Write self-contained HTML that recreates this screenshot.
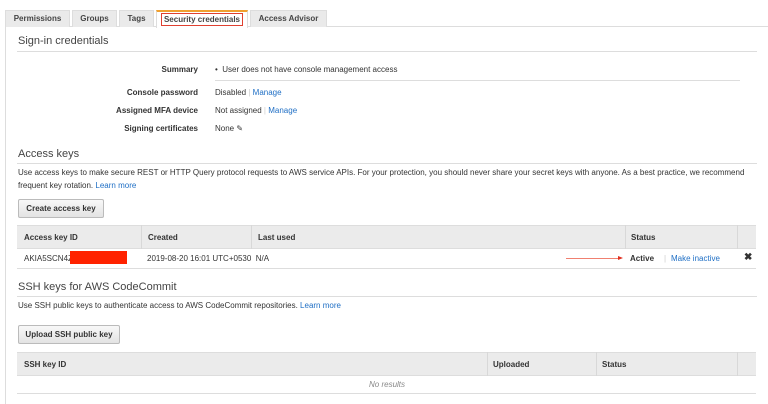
<!DOCTYPE html><html><head><style>
*{margin:0;padding:0;box-sizing:border-box}
body{width:768px;height:404px;background:#fff;font-family:"Liberation Sans",Arial,sans-serif;font-size:8px;color:#333;position:relative;overflow:hidden}
.a{position:absolute;white-space:nowrap}
.tab{position:absolute;top:10px;height:17px;background:#eaeaea;border:1px solid #ddd;border-bottom:none;font-weight:bold;font-size:8px;line-height:16px;text-align:center;color:#444}
.h{font-size:11px;color:#444}
.ln{position:absolute;height:1px;background:#ddd}
.lb{position:absolute;right:570px;font-weight:bold;font-size:8px}
.lk{color:#1f6fc5}
.btn{position:absolute;background:linear-gradient(#f8f8f8,#e3e3e3);border:1px solid #bbb;border-radius:2px;font-weight:bold;font-size:8px;line-height:17px;text-align:center;color:#333}
.th{position:absolute;background:#ebebeb;border-top:1px solid #ddd;border-bottom:1px solid #ddd;height:24px}
.vd{position:absolute;width:1px;background:#d8d8d8}
</style></head><body>
<div style="position:absolute;left:5px;top:26px;width:763px;height:378px;border-left:1px solid #ddd;border-top:1px solid #ddd"></div>
<div class="tab" style="left:5px;width:65px">Permissions</div>
<div class="tab" style="left:72px;width:45px">Groups</div>
<div class="tab" style="left:119px;width:35px">Tags</div>
<div class="tab" style="left:156px;width:92px;background:#fff;border-top:2px solid #f0a030;height:18px"><span style="border:1px solid #e04030;padding:0 2px;display:inline-block;line-height:11px;margin-top:1px">Security credentials</span></div>
<div class="tab" style="left:250px;width:77px">Access Advisor</div>
<div class="a h" style="left:18px;top:35px">Sign-in credentials</div>
<div class="ln" style="left:17px;top:51px;width:740px"></div>
<div class="lb" style="top:65px">Summary</div>
<div class="a" style="left:215px;top:65px">•&nbsp; User does not have console management access</div>
<div class="ln" style="left:215px;top:80px;width:525px"></div>
<div class="lb" style="top:88px">Console password</div>
<div class="a" style="left:215px;top:88px">Disabled <span style="color:#ccc">|</span> <span class="lk">Manage</span></div>
<div class="lb" style="top:106px">Assigned MFA device</div>
<div class="a" style="left:215px;top:106px">Not assigned <span style="color:#ccc">|</span> <span class="lk">Manage</span></div>
<div class="lb" style="top:124px">Signing certificates</div>
<div class="a" style="left:215px;top:124px">None ✎</div>
<div class="a h" style="left:18px;top:148px">Access keys</div>
<div class="ln" style="left:17px;top:163px;width:740px"></div>
<div class="a" style="left:18px;top:168px">Use access keys to make secure REST or HTTP Query protocol requests to AWS service APIs. For your protection, you should never share your secret keys with anyone. As a best practice, we recommend</div>
<div class="a" style="left:18px;top:181px">frequent key rotation. <span class="lk">Learn more</span></div>
<div class="btn" style="left:18px;top:199px;width:86px;height:19px">Create access key</div>
<div class="th" style="left:17px;top:225px;width:739px"></div>
<div class="vd" style="left:141px;top:225px;height:24px"></div>
<div class="vd" style="left:251px;top:225px;height:24px"></div>
<div class="vd" style="left:625px;top:225px;height:24px"></div>
<div class="vd" style="left:737px;top:225px;height:24px"></div>
<div class="a" style="left:24px;top:233px;font-weight:bold">Access key ID</div>
<div class="a" style="left:148px;top:233px;font-weight:bold">Created</div>
<div class="a" style="left:258px;top:233px;font-weight:bold">Last used</div>
<div class="a" style="left:631px;top:233px;font-weight:bold">Status</div>
<div class="a" style="left:24px;top:254px">AKIA5SCN4Z</div>
<div style="position:absolute;left:70px;top:251px;width:57px;height:13px;background:#ff2200"></div>
<div class="a" style="left:147px;top:254px">2019-08-20 16:01 UTC+0530&nbsp; N/A</div>
<div style="position:absolute;left:566px;top:258px;width:53px;height:1px;background:#f08070"></div>
<div style="position:absolute;left:618px;top:256px;border-left:5px solid #e03020;border-top:2.5px solid transparent;border-bottom:2.5px solid transparent"></div>
<div class="a" style="left:630px;top:254px;font-weight:bold">Active</div>
<div class="a" style="left:664px;top:254px;color:#ccc">|</div>
<div class="a lk" style="left:671px;top:254px">Make inactive</div>
<div class="a" style="left:744px;top:252px;font-weight:bold;font-size:10px">✖</div>
<div class="ln" style="left:17px;top:268px;width:739px"></div>
<div class="a h" style="left:18px;top:281px">SSH keys for AWS CodeCommit</div>
<div class="ln" style="left:17px;top:296px;width:740px"></div>
<div class="a" style="left:18px;top:301px">Use SSH public keys to authenticate access to AWS CodeCommit repositories. <span class="lk">Learn more</span></div>
<div class="btn" style="left:18px;top:325px;width:102px;height:19px">Upload SSH public key</div>
<div class="th" style="left:17px;top:352px;width:739px"></div>
<div class="vd" style="left:487px;top:352px;height:24px"></div>
<div class="vd" style="left:596px;top:352px;height:24px"></div>
<div class="vd" style="left:737px;top:352px;height:24px"></div>
<div class="a" style="left:24px;top:360px;font-weight:bold">SSH key ID</div>
<div class="a" style="left:493px;top:360px;font-weight:bold">Uploaded</div>
<div class="a" style="left:602px;top:360px;font-weight:bold">Status</div>
<div class="a" style="left:369px;top:380px;font-style:italic;color:#888">No results</div>
<div class="ln" style="left:17px;top:393px;width:739px"></div>
</body></html>
